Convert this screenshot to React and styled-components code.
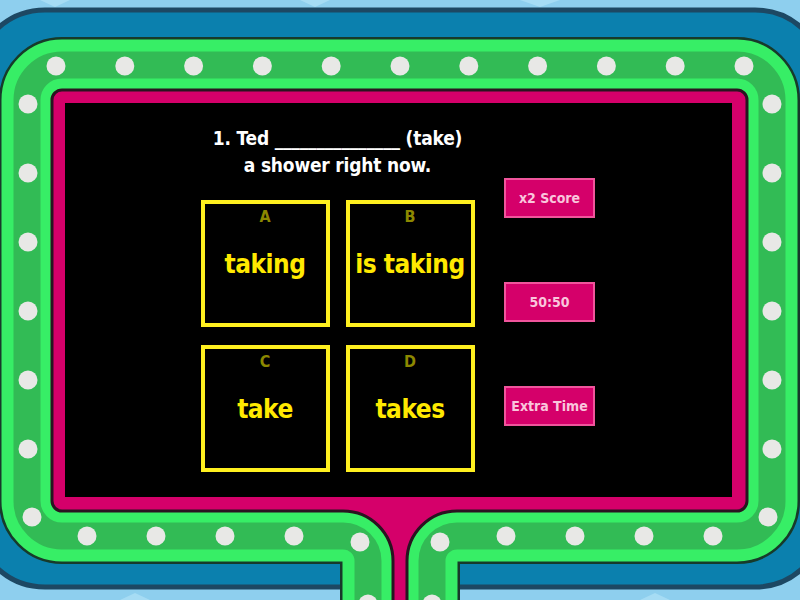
import React from 'react';
import styled, { createGlobalStyle } from 'styled-components';

const GlobalStyle = createGlobalStyle`
  html, body {
    margin: 0;
    padding: 0;
    background: #8ecfee;
    overflow: hidden;
  }
`;

const font = `'DejaVu Sans Condensed', 'Liberation Sans Narrow', 'Liberation Sans', sans-serif`;

const Stage = styled.div`
  position: relative;
  width: 800px;
  height: 600px;
  box-sizing: border-box;
  padding: 103px 68px 103px 65px;
  overflow: hidden;
  background: #8ecfee;
  font-family: ${font};
`;

const Backdrop = styled.svg`
  position: absolute;
  left: 0;
  top: 0;
  width: 800px;
  height: 600px;
`;

const Screen = styled.div`
  position: relative;
  width: 667px;
  height: 394px;
  box-sizing: border-box;
  background: #000;
  display: flex;
  padding: 22px 0 0 136px;
  gap: 30px;
`;

const Main = styled.div`
  width: 273px;
  display: flex;
  flex-direction: column;
  align-items: center;
`;

const Question = styled.div`
  color: #fff;
  font-weight: bold;
  font-size: 19px;
  letter-spacing: -0.2px;
  line-height: 27px;
  text-align: center;
  white-space: nowrap;
  height: 75px;
`;

const Grid = styled.div`
  display: grid;
  grid-template-columns: repeat(2, 129px);
  grid-auto-rows: 127px;
  column-gap: 16px;
  row-gap: 18px;
`;

const Answer = styled.div`
  box-sizing: border-box;
  border: 4px solid #fff01f;
  display: grid;
  grid-template-rows: 22px 1fr 22px;
  justify-items: center;
  align-items: center;
`;

const Letter = styled.div`
  align-self: end;
  color: #8c8800;
  font-weight: bold;
  font-size: 16px;
  line-height: 18px;
`;

const Word = styled.div`
  color: #ffe900;
  font-weight: bold;
  font-size: 26px;
  letter-spacing: -0.5px;
  white-space: nowrap;
`;

const Side = styled.div`
  display: flex;
  flex-direction: column;
  gap: 64px;
  padding-top: 53px;
`;

const Power = styled.div`
  box-sizing: border-box;
  width: 91px;
  height: 40px;
  background: #d5006a;
  border: 2px solid #f0559c;
  color: #f9c6dc;
  font-weight: bold;
  font-size: 14px;
  display: flex;
  align-items: center;
  justify-content: center;
  white-space: nowrap;
`;

const track =
  'M 368 660 V 561 A 25 25 0 0 0 343 536 H 62 A 35 35 0 0 1 27 501 V 100 A 35 35 0 0 1 62 65 H 737 A 35 35 0 0 1 772 100 V 501 A 35 35 0 0 1 737 536 H 457 A 25 25 0 0 0 432 561 V 660';

const inner =
  'M 62 90 H 737 A 10 10 0 0 1 747 100 V 501 A 10 10 0 0 1 737 511 H 457 A 50 50 0 0 0 407 561 V 640 H 393 V 561 A 50 50 0 0 0 343 511 H 62 A 10 10 0 0 1 52 501 V 100 A 10 10 0 0 1 62 90 Z';

const dots = [
  ...Array.from({ length: 11 }, (_, i) => [56 + 68.8 * i, 66]),
  ...Array.from({ length: 6 }, (_, i) => [28, 104 + 69 * i]),
  ...Array.from({ length: 6 }, (_, i) => [772, 104 + 69 * i]),
  [32, 517], [768, 517],
  [87, 536], [156, 536], [225, 536], [294, 536], [360, 542], [368, 604],
  [713, 536], [644, 536], [575, 536], [506, 536], [440, 542], [432, 604],
];

const Frame = () => (
  <Backdrop viewBox="0 0 800 600">
    <g fill="#a6dcf4">
      <polygon points="40,0 70,0 55,7" />
      <polygon points="300,0 330,0 315,7" />
      <polygon points="520,0 560,0 540,7" />
      <polygon points="120,600 150,600 135,593" />
      <polygon points="640,600 670,600 655,593" />
    </g>
    <rect x="-25" y="10" width="850" height="577" rx="70" fill="#0b80ae" stroke="#1d4863" strokeWidth="5" />
    <g fill="none" strokeLinejoin="round">
      <path d={track} stroke="#173a2a" strokeWidth="56" />
      <path d={track} stroke="#37ee66" strokeWidth="51" />
      <path d={track} stroke="#32bb55" strokeWidth="27" />
    </g>
    {dots.map(([x, y], i) => (
      <circle key={i} cx={x} cy={y} r="9.5" fill="#e8e8e6" />
    ))}
    <path d={inner} fill="#d5006a" stroke="#2a1420" strokeWidth="3" />
  </Backdrop>
);

const answers = [
  ['A', 'taking'],
  ['B', 'is taking'],
  ['C', 'take'],
  ['D', 'takes'],
];

const App = () => (
  <Stage>
    <GlobalStyle />
    <Frame />
    <Screen>
      <Main>
        <Question>
          1. Ted _______________ (take)
          <br />
          a shower right now.
        </Question>
        <Grid>
          {answers.map(([l, w]) => (
            <Answer key={l}>
              <Letter>{l}</Letter>
              <Word>{w}</Word>
            </Answer>
          ))}
        </Grid>
      </Main>
      <Side>
        <Power>x2 Score</Power>
        <Power>50:50</Power>
        <Power>Extra Time</Power>
      </Side>
    </Screen>
  </Stage>
);

export default App;
